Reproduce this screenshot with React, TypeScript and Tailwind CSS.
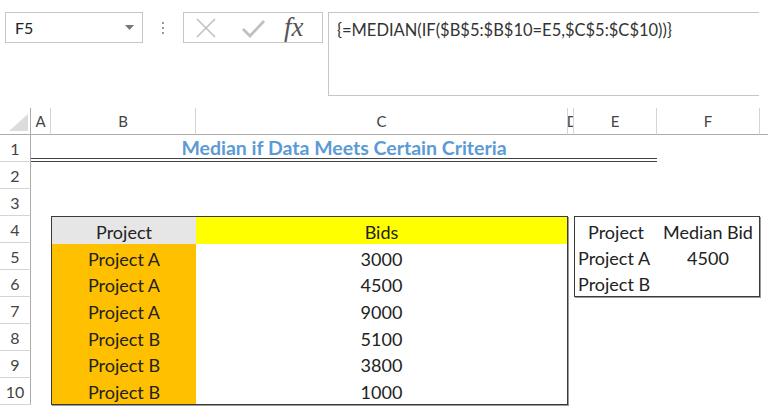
import React from 'react';

const FONT = { fontFamily: 'Lato, "Open Sans", sans-serif' };

const COLUMNS: { label: string; cls: string }[] = [
  { label: 'A', cls: 'col-start-2' },
  { label: 'B', cls: 'col-start-3' },
  { label: 'C', cls: 'col-start-4' },
  { label: 'D', cls: 'col-start-5' },
  { label: 'E', cls: 'col-start-6' },
  { label: 'F', cls: 'col-start-7' }
];

// row-start classes written out so Tailwind picks them up
const ROW_STARTS = [
  'row-start-2',
  'row-start-3',
  'row-start-4',
  'row-start-5',
  'row-start-6',
  'row-start-7',
  'row-start-8',
  'row-start-9',
  'row-start-10',
  'row-start-11'
];

const BIDS: { project: string; bid: number }[] = [
  { project: 'Project A', bid: 3000 },
  { project: 'Project A', bid: 4500 },
  { project: 'Project A', bid: 9000 },
  { project: 'Project B', bid: 5100 },
  { project: 'Project B', bid: 3800 },
  { project: 'Project B', bid: 1000 }
];

const cell = 'flex items-center pt-[3px] leading-[20px]';

const FormulaBar = () => (
  <div className="flex items-start pt-[12px]">
    <div className="ml-[5px] flex h-[31px] w-[138px] items-center justify-between border border-[#c6c6c6] pl-[9px] pr-[8px]">
      <span className="text-[16px] text-[#222]" style={FONT}>
        F5
      </span>
      <svg width="9" height="6" viewBox="0 0 9 6">
        <path d="M0 0 H9 L4.5 5 Z" fill="#777" />
      </svg>
    </div>
    <div className="ml-[19px] flex h-[31px] flex-col items-center justify-center gap-[3px]">
      <span className="h-[2px] w-[2px] bg-[#999]" />
      <span className="h-[2px] w-[2px] bg-[#999]" />
      <span className="h-[2px] w-[2px] bg-[#999]" />
    </div>
    <div className="ml-[19px] flex h-[31px] w-[140px] items-center border border-[#c6c6c6] pl-[11px]">
      <svg width="22" height="22" viewBox="0 0 22 22">
        <path d="M2 2 L20 20 M20 2 L2 20" stroke="#c0c0c0" strokeWidth="1.6" />
      </svg>
      <svg className="ml-[24px]" width="25" height="20" viewBox="0 0 25 20">
        <path d="M2 11 L9 18 L23 3" stroke="#c0c0c0" strokeWidth="2.8" fill="none" />
      </svg>
      <span
        className="ml-[18px] text-[27px] italic leading-none text-[#555]"
        style={{ fontFamily: '"Liberation Serif", serif' }}
      >
        fx
      </span>
    </div>
    <div className="ml-[5px] h-[84px] w-[431px] border-t border-b border-l border-[#c6c6c6] pl-[8px] pt-[5px]">
      <span className="text-[16.5px] text-[#333]" style={FONT}>
        {'{=MEDIAN(IF($B$5:$B$10=E5,$C$5:$C$10))}'}
      </span>
    </div>
  </div>
);

const Sheet = () => (
  <div
    className="mt-[12px] grid grid-cols-[31px_20px_145px_372px_6px_83px_103px_1fr] grid-rows-[repeat(11,27px)]"
    style={FONT}
  >
    {/* corner */}
    <div className="col-start-1 row-start-1 flex items-end justify-end border-r border-b border-[#ababab] pr-[2px] pb-[3px]">
      <svg width="19" height="17" viewBox="0 0 19 17">
        <path d="M19 0 V17 H0 Z" fill="#dcdcdc" />
      </svg>
    </div>

    {COLUMNS.map(col => (
      <div
        key={col.label}
        className={`${col.cls} row-start-1 flex items-center justify-center overflow-hidden border-r border-b border-r-[#d4d4d4] border-b-[#ababab] text-[15px] text-[#444]`}
      >
        {col.label === 'D' ? <span className="ml-[4px]">D</span> : col.label}
      </div>
    ))}
    <div className="col-start-8 row-start-1 border-b border-[#ababab]" />

    {ROW_STARTS.map((rowCls, i) => (
      <div
        key={rowCls}
        className={`col-start-1 ${rowCls} flex items-center justify-center border-r border-b border-r-[#ababab] border-b-[#d4d4d4] pt-[2px] text-[16px] text-[#444]`}
      >
        {i + 1}
      </div>
    ))}

    {/* row 1 title, merged A:E with double underline */}
    <div className="col-start-2 col-span-5 row-start-2 flex items-center justify-center border-b-4 border-double border-[#444] pt-[2px] text-[19.5px] font-bold leading-[22px] text-[#5b9bd5]">
      Median if Data Meets Certain Criteria
    </div>

    {/* data table B4:C10 */}
    <div className="col-start-3 col-span-2 row-start-5 row-span-7 grid grid-cols-[144px_1fr] grid-rows-[repeat(7,minmax(0,1fr))] border border-[#3a3a3a] text-[18px] text-[#222] shadow-[1px_1px_0_#9a9a9a]">
      <div className={`${cell} justify-center bg-[#e7e6e6]`}>Project</div>
      <div className={`${cell} justify-center bg-[#ffff00]`}>Bids</div>
      {BIDS.map((row, i) => (
        <React.Fragment key={i}>
          <div className={`${cell} justify-center bg-[#ffc000]`}>{row.project}</div>
          <div className={`${cell} justify-center bg-white`}>{row.bid}</div>
        </React.Fragment>
      ))}
    </div>

    {/* summary E4:F6 */}
    <div className="col-start-6 col-span-2 row-start-5 row-span-3 grid grid-cols-[82px_1fr] grid-rows-[repeat(3,minmax(0,1fr))] border border-[#3a3a3a] text-[18px] text-[#222] shadow-[1px_1px_0_#9a9a9a]">
      <div className={`${cell} justify-center`}>Project</div>
      <div className={`${cell} justify-center whitespace-nowrap`}>Median Bid</div>
      <div className={`${cell} whitespace-nowrap pl-[3px]`}>Project A</div>
      <div className={`${cell} justify-center`}>4500</div>
      <div className={`${cell} whitespace-nowrap pl-[3px]`}>Project B</div>
      <div />
    </div>
  </div>
);

export default function App() {
  return (
    <div className="h-[415px] w-[768px] overflow-hidden bg-white">
      <FormulaBar />
      <Sheet />
    </div>
  );
}
